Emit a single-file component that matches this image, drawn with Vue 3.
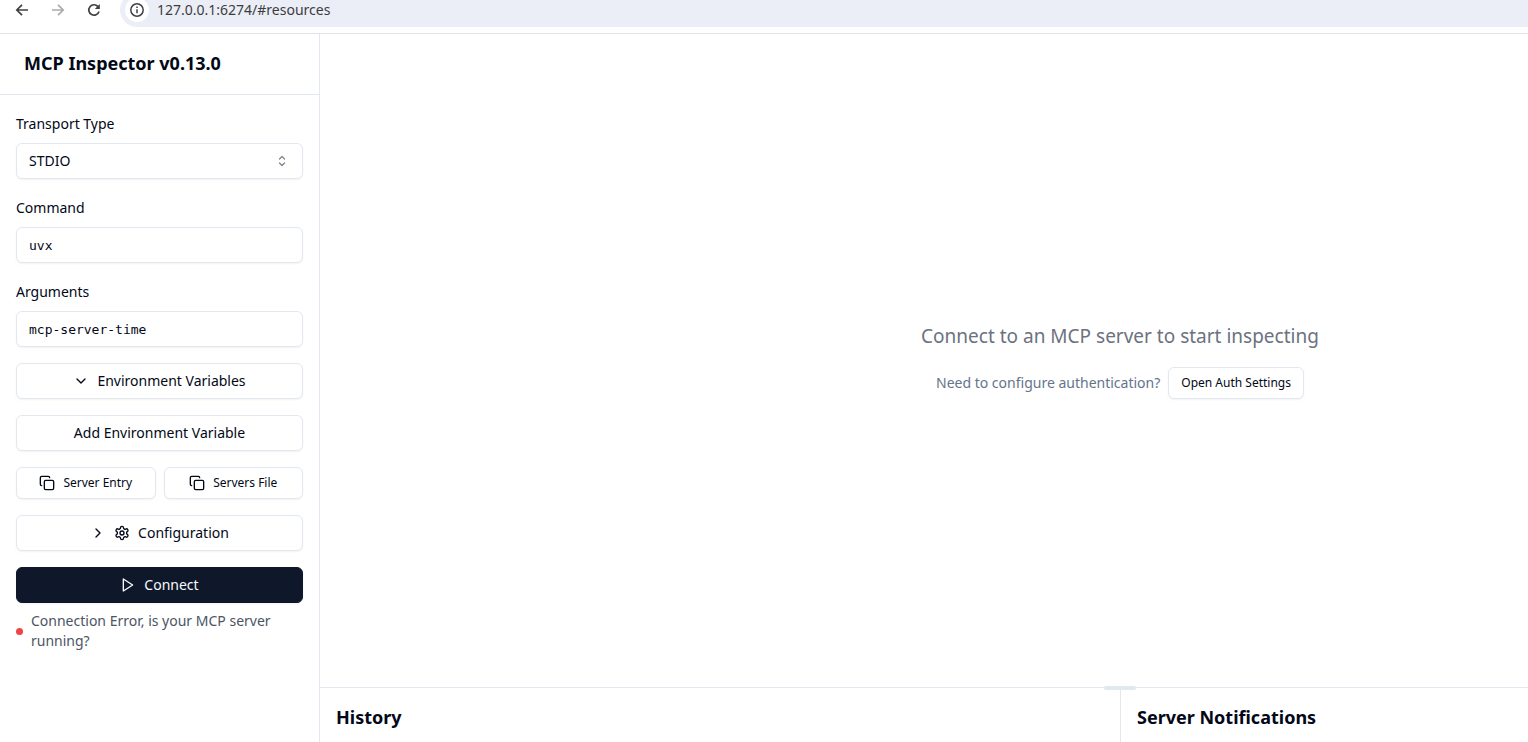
<script setup>
import { ref } from 'vue'

const address = ref('127.0.0.1:6274/#resources')
const transport = ref('STDIO')
const command = ref('uvx')
const args = ref('mcp-server-time')
</script>

<template>
  <div class="page">
    <header class="browser">
      <nav class="nav" aria-label="Browser">
        <button class="nav-button" type="button" aria-label="Back">
          <svg width="16" height="16" viewBox="0 0 16 16" fill="none" stroke="#3f4043" stroke-width="1.7"><path d="M14 8H3M8 2.8 2.8 8 8 13.2" /></svg>
        </button>
        <button class="nav-button" type="button" aria-label="Forward">
          <svg width="16" height="16" viewBox="0 0 16 16" fill="none" stroke="#a9abae" stroke-width="1.7"><path d="M2 8h11M8 2.8 13.2 8 8 13.2" /></svg>
        </button>
        <button class="nav-button" type="button" aria-label="Reload">
          <svg width="16" height="16" viewBox="0 0 16 16" fill="none" stroke="#3f4043" stroke-width="1.7"><path d="M13 9.4A5.2 5.2 0 1 1 12 4.6" /><path d="M13.8 2v5H8.8Z" fill="#3f4043" stroke="none" /></svg>
        </button>
      </nav>
      <div class="address">
        <span class="info">
          <svg width="16" height="16" viewBox="0 0 16 16" fill="none" stroke="#3f4043" stroke-width="1.5"><circle cx="8" cy="8" r="6.2" /><path d="M8 7.3v4M8 4.5v1.6" /></svg>
        </span>
        <input v-model="address" class="address-input" type="text" aria-label="Address" />
      </div>
    </header>

    <div class="app">
      <aside class="sidebar">
        <div class="brand"><h1 class="title">MCP Inspector v0.13.0</h1></div>
        <form class="form" @submit.prevent>
          <div class="field">
            <label for="transport">Transport Type</label>
            <div class="select-wrap">
              <select id="transport" v-model="transport" class="control">
                <option>STDIO</option>
                <option>SSE</option>
              </select>
              <svg class="select-icon" width="16" height="16" viewBox="0 0 16 16" fill="none" stroke="currentColor" stroke-width="1.2" stroke-linecap="round" stroke-linejoin="round"><path d="M5.5 6 8 3.5 10.5 6M5.5 10 8 12.5 10.5 10" /></svg>
            </div>
          </div>
          <div class="field">
            <label for="command">Command</label>
            <input id="command" v-model="command" class="control mono" type="text" />
          </div>
          <div class="field">
            <label for="arguments">Arguments</label>
            <input id="arguments" v-model="args" class="control mono" type="text" />
          </div>

          <button class="button" type="button" aria-expanded="true">
            <svg class="icon" viewBox="0 0 24 24"><path d="m6 9 6 6 6-6" /></svg>
            Environment Variables
          </button>
          <button class="button" type="button">Add Environment Variable</button>

          <div class="pair">
            <button v-for="name in ['Server Entry', 'Servers File']" :key="name" class="button small" type="button">
              <svg class="icon" viewBox="0 0 24 24"><rect width="14" height="14" x="8" y="8" rx="2" ry="2" /><path d="M4 16c-1.1 0-2-.9-2-2V4c0-1.1.9-2 2-2h10c1.1 0 2 .9 2 2" /></svg>
              {{ name }}
            </button>
          </div>

          <button class="button" type="button" aria-expanded="false">
            <svg class="icon" viewBox="0 0 24 24"><path d="m9 18 6-6-6-6" /></svg>
            <svg class="icon" viewBox="0 0 24 24"><path d="M12.22 2h-.44a2 2 0 0 0-2 2v.18a2 2 0 0 1-1 1.73l-.43.25a2 2 0 0 1-2 0l-.15-.08a2 2 0 0 0-2.73.73l-.22.38a2 2 0 0 0 .73 2.73l.15.1a2 2 0 0 1 1 1.72v.51a2 2 0 0 1-1 1.74l-.15.09a2 2 0 0 0-.73 2.73l.22.38a2 2 0 0 0 2.73.73l.15-.08a2 2 0 0 1 2 0l.43.25a2 2 0 0 1 1 1.73V20a2 2 0 0 0 2 2h.44a2 2 0 0 0 2-2v-.18a2 2 0 0 1 1-1.73l.43-.25a2 2 0 0 1 2 0l.15.08a2 2 0 0 0 2.73-.73l.22-.39a2 2 0 0 0-.73-2.73l-.15-.08a2 2 0 0 1-1-1.74v-.5a2 2 0 0 1 1-1.74l.15-.09a2 2 0 0 0 .73-2.73l-.22-.38a2 2 0 0 0-2.73-.73l-.15.08a2 2 0 0 1-2 0l-.43-.25a2 2 0 0 1-1-1.73V4a2 2 0 0 0-2-2z" /><circle cx="12" cy="12" r="3" /></svg>
            Configuration
          </button>

          <div class="connect">
            <button class="button primary" type="submit">
              <svg class="icon" viewBox="0 0 24 24"><path d="M5 3 19 12 5 21Z" /></svg>
              Connect
            </button>
            <p class="status"><span class="dot"></span>Connection Error, is your MCP server running?</p>
          </div>
        </form>
      </aside>

      <main class="workspace">
        <section class="welcome">
          <p class="lead">Connect to an MCP server to start inspecting</p>
          <div class="auth">
            <p>Need to configure authentication?</p>
            <button class="button small" type="button">Open Auth Settings</button>
          </div>
        </section>
        <section class="bottom">
          <div class="handle"></div>
          <div class="pane"><h2 class="title">History</h2></div>
          <div class="pane divided"><h2 class="title">Server Notifications</h2></div>
        </section>
      </main>
    </div>
  </div>
</template>

<style>
body {
  margin: 0;
  overflow: hidden;
}
</style>

<style scoped>
.page {
  display: flex;
  flex-direction: column;
  height: 100vh;
  overflow: hidden;
  background: #fff;
  color: #020817;
  font: 14px/20px "Noto Sans", "Open Sans", sans-serif;
}
.page *,
.page *::before {
  box-sizing: border-box;
}
p, h1, h2 {
  margin: 0;
}
button, input, select {
  font: inherit;
  color: inherit;
}
.browser {
  display: flex;
  flex: none;
  height: 34px;
  overflow: hidden;
  border-bottom: 1px solid #e0e2e6;
}
.nav {
  display: flex;
  gap: 20px;
  width: 120px;
  padding: 2px 0 0 14px;
}
.nav-button {
  display: block;
  width: 16px;
  height: 16px;
  padding: 0;
  border: 0;
  background: none;
}
.nav-button svg,
.info svg {
  display: block;
}
.address {
  display: flex;
  flex: 1;
  align-items: center;
  gap: 8px;
  height: 34px;
  margin-top: -7px;
  padding-left: 5px;
  border-radius: 17px 0 0 17px;
  background: #ebeef7;
}
.info {
  padding: 4px;
  border-radius: 50%;
  background: #fff;
}
.address-input {
  flex: 1;
  padding: 0;
  border: 0;
  outline: 0;
  background: none;
  color: #3c3d40;
}
.app {
  display: flex;
  flex: 1;
  min-height: 0;
}
.sidebar {
  flex: none;
  width: 320px;
  border-right: 1px solid #e2e8f0;
}
.brand {
  padding: 16px 24px 18px;
  border-bottom: 1px solid #e2e8f0;
}
.title {
  font-size: 18px;
  line-height: 26px;
  font-weight: 700;
}
.form {
  display: flex;
  flex-direction: column;
  gap: 16px;
  padding: 16px;
}
.field {
  display: flex;
  flex-direction: column;
  gap: 6px;
}
.field label {
  line-height: 26px;
}
.select-wrap {
  position: relative;
}
.control {
  display: block;
  width: 100%;
  height: 36px;
  padding: 0 12px;
  border: 1px solid #e2e8f0;
  border-radius: 6px;
  background: #fff;
  box-shadow: 0 1px 2px rgb(0 0 0 / 5%);
  appearance: none;
}
.mono {
  font-family: "DejaVu Sans Mono", "Liberation Mono", monospace;
  font-size: 13px;
}
.select-icon {
  position: absolute;
  top: 10px;
  right: 13px;
  opacity: 0.5;
}
.button {
  display: flex;
  align-items: center;
  justify-content: center;
  gap: 8px;
  height: 36px;
  padding: 0 12px;
  border: 1px solid #e2e8f0;
  border-radius: 6px;
  background: #fff;
  box-shadow: 0 1px 2px rgb(0 0 0 / 5%);
  white-space: nowrap;
}
.small {
  height: 32px;
  font-size: 12px;
}
.icon {
  flex: none;
  width: 16px;
  height: 16px;
  fill: none;
  stroke: currentColor;
  stroke-width: 2;
  stroke-linecap: round;
  stroke-linejoin: round;
}
.pair {
  display: grid;
  grid-template-columns: 1fr 1fr;
  gap: 8px;
}
.connect {
  display: flex;
  flex-direction: column;
  gap: 8px;
}
.primary {
  border-color: #0f172a;
  background: #0f172a;
  color: #f8fafc;
}
.status {
  display: flex;
  align-items: center;
  gap: 8px;
  color: #4b5563;
}
.dot {
  flex: none;
  width: 7px;
  height: 7px;
  border-radius: 50%;
  background: #ef4444;
}
.workspace {
  display: flex;
  flex: 1 0 auto;
  flex-direction: column;
  min-width: 1600px;
}
.welcome {
  display: flex;
  flex: 1;
  flex-direction: column;
  align-items: center;
  justify-content: center;
  gap: 18px;
  color: #6b7280;
}
.lead {
  font-size: 19px;
  line-height: 26px;
}
.auth {
  display: flex;
  align-items: center;
  gap: 8px;
  color: #64748b;
}
.auth .button {
  color: #020817;
}
.bottom {
  position: relative;
  display: grid;
  grid-template-columns: 1fr 1fr;
  height: 55px;
  border-top: 1px solid #e2e8f0;
}
.handle {
  position: absolute;
  top: -2px;
  left: calc(50% - 16px);
  width: 32px;
  height: 4px;
  border-radius: 2px;
  background: #e2e8f0;
}
.pane {
  padding: 16px;
}
.divided {
  border-left: 1px solid #e2e8f0;
}
</style>
